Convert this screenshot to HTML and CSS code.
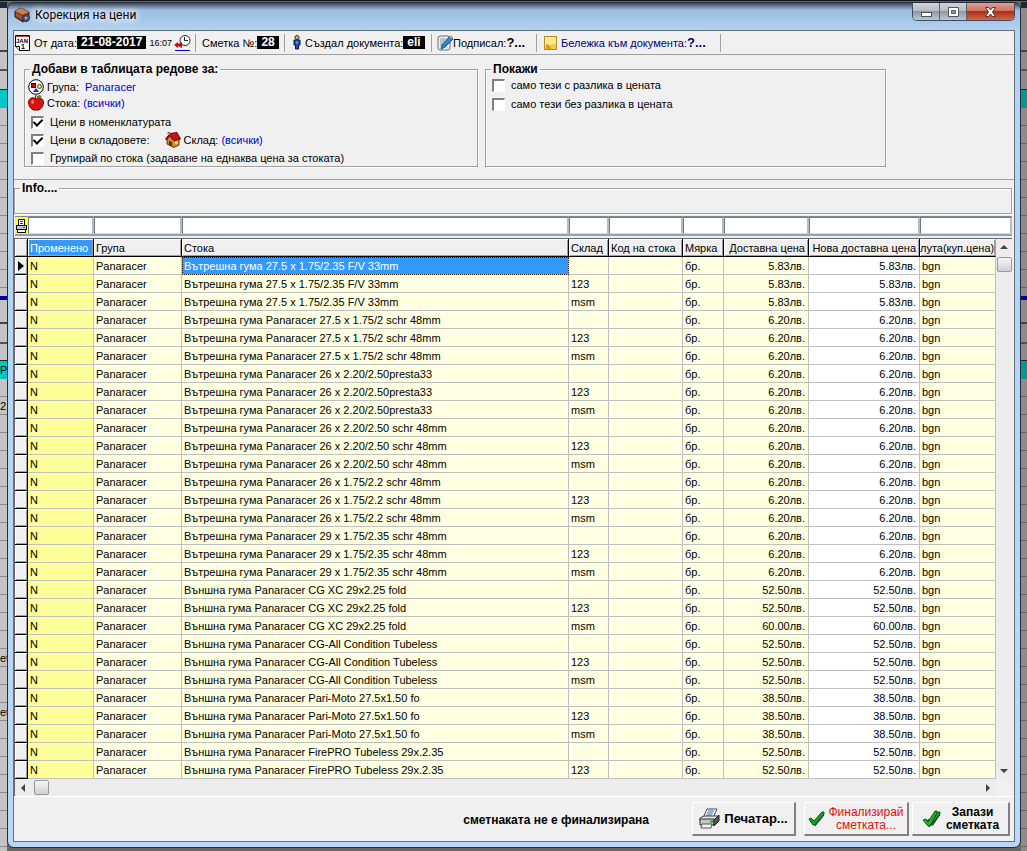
FILE: index.html
```html
<!DOCTYPE html>
<html lang="bg">
  <head>
    <meta charset="UTF-8" />
    <meta name="viewport" content="width=device-width, initial-scale=1.0"/>
    <title>Корекция на цени</title>
    <link rel="stylesheet" href="styles.css">
  </head>

  <body>
    <div class="desktop">
      <div class="strip">
        <div class="strip-head"></div>
        <div class="strip-cyan"></div>
        <div class="strip-rows upper"></div>
        <div class="strip-blue"></div>
        <div class="strip-mid"></div>
        <div class="strip-cyan">Pa</div>
        <div class="strip-rows code">2:</div>
        <div class="strip-rows tail">et</div>
        <div class="strip-rows last">et</div>
      </div>

      <div class="window">
        <div class="titlebar">
          <svg class="title-icon" width="17" height="16" viewBox="0 0 17 16">
            <path d="M1 4 7 1 15 5 15 11 9 15 1 10Z" fill="#7a3a1c" stroke="#3c1a0a"/>
            <path d="M1 4 7 1 15 5 9 8Z" fill="#c98050"/>
            <path d="M2 6 8 9 8 13 2 9Z" fill="#a3562e"/>
            <circle cx="12" cy="11" r="3.5" fill="#565a78" stroke="#25283c"/>
            <circle cx="12" cy="11" r="1" fill="#c8cce4"/>
          </svg>
          <h1>Корекция на цени</h1>
          <div class="window-buttons">
            <button class="win-btn" aria-label="Минимизирай">
              <svg width="13" height="12" viewBox="0 0 13 12"><rect x="1.500" y="6.500" width="10" height="4" fill="#fff" stroke="#555"/></svg>
            </button>
            <button class="win-btn" aria-label="Максимизирай">
              <svg width="13" height="12" viewBox="0 0 13 12"><path d="M1.500 1.500H11.500V10.500H1.500Z M4.500 4.500V7.500H8.500V4.500Z" fill="#fff" fill-rule="evenodd" stroke="#555"/></svg>
            </button>
            <button class="win-btn close" aria-label="Затвори">
              <svg width="13" height="12" viewBox="0 0 13 12"><path d="M1.500 1.500H4.500L6.500 4L8.500 1.500H11.500L8.500 6L11.500 10.500H8.500L6.500 8L4.500 10.500H1.500L4.500 6Z" fill="#fff" stroke="#5a3038"/></svg>
            </button>
          </div>
        </div>

        <main class="client">
          <div class="toolbar">
            <div class="tool date">
              <svg width="15" height="16" viewBox="0 0 15 16">
                <path d="M0.500 0.500H14.500V15.500H4.500L0.500 11.500Z" fill="#fff" stroke="#000"/>
                <path d="M1 1.500H14" stroke="#b44"/>
                <text class="cal-month" x="7" y="8" text-anchor="middle">JAN</text>
                <text class="cal-day" x="8" y="14" text-anchor="middle">1</text>
                <path d="M0.500 11.500H4.500V15.500" fill="#ddd" stroke="#000"/>
              </svg>
              <span class="caption">От дата:</span><b class="value">21-08-2017</b>
              <span class="time">16:07</span>
              <svg class="clock" width="17" height="16" viewBox="0 0 17 16">
                <circle cx="11" cy="5.500" r="5" fill="#fff" stroke="#222"/>
                <path d="M10.500 2V5.500H14" fill="none" stroke="#222"/>
                <path d="M0 10 4 7V9L8 7V13L4 11V13Z" fill="#e00000"/>
                <path d="M1 15.500H16" stroke="#0000d0"/>
              </svg>
            </div>
            <div class="tool bill"><span>Сметка №:</span><b class="value">28</b></div>
            <div class="tool author">
              <svg width="8" height="15" viewBox="0 0 8 15">
                <circle cx="4" cy="2.500" r="2" fill="#f0c040" stroke="#222"/>
                <path d="M1 5H7V10H5.500V14H2.500V10H1Z" fill="#1c50c8" stroke="#101840"/>
                <path d="M4 6V9" stroke="#6fd0ff"/>
              </svg>
              <span class="caption">Създал документа:</span><b class="value">eli</b>
            </div>
            <div class="tool signed">
              <svg width="16" height="16" viewBox="0 0 16 16">
                <rect x="1" y="1" width="12" height="14" rx="2" fill="#e8eef2" stroke="#667078"/>
                <path d="M3 4H9M3 6H8M3 8H6M3 10H5" stroke="#8b989e"/>
                <path d="M13 1 16 4 8 12 4 14 5 10Z" fill="#2b86d8" stroke="#14508e"/>
                <path d="M12 2 14 0 16 2 15 4Z" fill="#e49a50"/>
              </svg>
              <span>Подписал:</span><b class="mark">?...</b>
            </div>
            <div class="tool note">
              <svg width="13" height="14" viewBox="0 0 13 14">
                <rect x="0.500" y="0.500" width="12" height="13" fill="#fbe88a" stroke="#b08c30"/>
                <path d="M2 8 5 9 8 13H2Z" fill="#e39a18"/>
                <path d="M5 9 12 8V13H8Z" fill="#f2c84c"/>
              </svg>
              <a href="#">Бележка към документа:<b>?...</b></a>
            </div>
          </div>

          <div class="options">
            <fieldset class="add-rows">
              <legend>Добави в таблицата редове за:</legend>
              <div class="pick">
                <svg width="16" height="16" viewBox="0 0 16 16">
                  <circle cx="8" cy="8" r="7.300" fill="#fff" stroke="#000"/>
                  <rect x="3.500" y="4.500" width="4" height="4" fill="#d00" stroke="#400"/>
                  <circle cx="11.500" cy="7.500" r="2" fill="#ffe030" stroke="#444"/>
                  <path d="M8 9 11 13H5Z" fill="#1030b0"/>
                </svg>
                <span>Група:</span><a class="group-link" href="#">Panaracer</a>
              </div>
              <div class="pick">
                <svg width="16" height="16" viewBox="0 0 16 16">
                  <path d="M8 4C4 1 0 4 0.500 8 1 12 4 16 8 15 12 16 15 12 15.500 8 16 4 12 1 8 4Z" fill="#d81410" stroke="#7c0806"/>
                  <path d="M7 4 8 0" stroke="#4a2c10"/>
                  <path d="M8 2 11 0 14 1 11 3Z" fill="#3a8c2c"/>
                  <ellipse cx="4.500" cy="7" rx="1.500" ry="2" fill="#f77a68"/>
                </svg>
                <span>Стока:</span><a href="#">(всички)</a>
              </div>
              <div class="checks">
                <label class="check"><input type="checkbox" checked>Цени в номенклатурата</label>
                <div class="check-line">
                  <label class="check"><input type="checkbox" checked>Цени в складовете:</label>
                  <svg width="16" height="16" viewBox="0 0 16 16">
                    <path d="M2 7 5 4 8 8 14 7V13L9 15.500 2 12Z" fill="#d08a30" stroke="#6a3810"/>
                    <path d="M0.500 7 5 1.500 12 0.500 15.500 7 9 8.500 5 3.500 1.500 8Z" fill="#c41818" stroke="#6c0808"/>
                    <path d="M4 13V9L7 10V14.500Z" fill="#5c2c0c"/>
                    <path d="M10 10 13 9.500V11.500L10 12Z" fill="#ffe480"/>
                    <path d="M3 2V0.500H5" fill="none" stroke="#8a4a20"/>
                  </svg>
                  <span>Склад:</span><a href="#">(всички)</a>
                </div>
                <label class="check"><input type="checkbox">Групирай по стока (задаване на еднаква цена за стоката)</label>
              </div>
            </fieldset>
            <fieldset class="show">
              <legend>Покажи</legend>
              <label class="check"><input type="checkbox">само тези с разлика в цената</label>
              <label class="check"><input type="checkbox">само тези без разлика в цената</label>
            </fieldset>
          </div>

          <fieldset class="info">
            <legend>Info....</legend>
          </fieldset>

          <div class="filters">
            <button class="print-filter" aria-label="Печат">
              <svg width="11" height="14" viewBox="0 0 11 14">
                <path d="M2.500 6V0.500H8.500V6" fill="#fff" stroke="#000"/>
                <path d="M4 2.500H7M4 4.500H7" stroke="#1030b0"/>
                <rect x="0.500" y="6.500" width="10" height="4" fill="#c8c8c8" stroke="#000"/>
                <rect x="1.500" y="10.500" width="8" height="3" fill="#fff" stroke="#000"/>
                <path d="M7 8.500H9" stroke="#0a0"/>
              </svg>
            </button>
            <input type="text" aria-label="Променено">
            <input type="text" aria-label="Група">
            <input type="text" aria-label="Стока">
            <input type="text" aria-label="Склад">
            <input type="text" aria-label="Код на стока">
            <input type="text" aria-label="Мярка">
            <input type="text" aria-label="Доставна цена">
            <input type="text" aria-label="Нова доставна цена">
            <input type="text" aria-label="Валута">
          </div>

          <div class="grid-box">
            <table>
              <colgroup>
                <col class="c-mark"><col class="c-changed"><col class="c-group"><col class="c-item"><col class="c-store">
                <col class="c-code"><col class="c-unit"><col class="c-price"><col class="c-new"><col class="c-currency">
              </colgroup>
              <thead>
                <tr>
                  <th></th>
                  <th class="active">Променено</th>
                  <th>Група</th>
                  <th>Стока</th>
                  <th>Склад</th>
                  <th>Код на стока</th>
                  <th>Мярка</th>
                  <th class="num">Доставна цена</th>
                  <th class="num">Нова доставна цена</th>
                  <th class="currency">лута(куп.цена)</th>
                </tr>
              </thead>
              <tbody id="rows"></tbody>
            </table>
            <div class="vscroll">
              <span class="arrow up"></span>
              <span class="thumb"></span>
              <span class="arrow down"></span>
            </div>
            <div class="hscroll">
              <span class="arrow back"></span>
              <span class="thumb"></span>
              <span class="arrow forward"></span>
            </div>
          </div>

          <footer>
            <b class="status">сметнаката не е финализирана</b>
            <button class="action print">
              <svg width="22" height="21" viewBox="0 0 22 21">
                <path d="M8 1H18L14 10H4Z" fill="#fff" stroke="#446"/>
                <path d="M9 3H15M8 5H14M7 7H13" stroke="#2c60c0"/>
                <path d="M1 10 5 8H19L15 13H1Z" fill="#e4e4e4" stroke="#444"/>
                <path d="M1 11H15V17H1Z" fill="#c4c8c8" stroke="#333"/>
                <path d="M15 12 20 7V13L15 18Z" fill="#555" stroke="#222"/>
                <path d="M3 16H13L12 20H2Z" fill="#f4f4f4" stroke="#555"/>
                <path d="M11 13.500H14" stroke="#0b0" stroke-width="2"/>
              </svg>
              <span>Печатар...</span>
            </button>
            <button class="action finalize">
              <svg width="17" height="17" viewBox="0 0 17 17">
                <path d="M1 9 3 8 6 11 14 2 16 2 16 4 7 15 5 15Z" fill="#12a020" stroke="#0a5a14"/>
                <path d="M7 16 16 5" stroke="#10203c"/>
              </svg>
              <span>Финализирай<br>сметката...</span>
            </button>
            <button class="action save">
              <svg width="19" height="20" viewBox="0 0 19 20">
                <path d="M5 12 7 10 10 12 16 3 18 3 18 5 11 16 8 16Z" fill="#12a020" stroke="#0a5a14"/>
                <path d="M1 11 4 10 6 13 13 2 15 2 15 4 8 17 6 17Z" fill="#22b034" stroke="#0a5a14"/>
                <path d="M7 18 18 6" stroke="#10203c"/>
              </svg>
              <span>Запази<br>сметката</span>
            </button>
          </footer>
        </main>
      </div>

      <div class="strip shaded">
        <div class="strip-head"></div>
        <div class="strip-cyan"></div>
        <div class="strip-rows upper"></div>
        <div class="strip-blue"></div>
        <div class="strip-mid"></div>
        <div class="strip-cyan"></div>
        <div class="strip-rows code"></div>
        <div class="strip-rows tail"></div>
        <div class="strip-rows last"></div>
      </div>
    </div>

    <script>
      // name, price for each of the three stores: none, 123, msm
      const items = [
        ["Вътрешна гума 27.5 x 1.75/2.35 F/V 33mm", "5.83", "5.83", "5.83"],
        ["Вътрешна гума Panaracer 27.5 x 1.75/2 schr 48mm", "6.20", "6.20", "6.20"],
        ["Вътрешна гума Panaracer 26 x 2.20/2.50presta33", "6.20", "6.20", "6.20"],
        ["Вътрешна гума Panaracer 26 x 2.20/2.50 schr 48mm", "6.20", "6.20", "6.20"],
        ["Вътрешна гума Panaracer 26 x 1.75/2.2 schr 48mm", "6.20", "6.20", "6.20"],
        ["Вътрешна гума Panaracer 29 x 1.75/2.35 schr 48mm", "6.20", "6.20", "6.20"],
        ["Външна гума Panaracer CG XC 29x2.25 fold", "52.50", "52.50", "60.00"],
        ["Външна гума Panaracer CG-All Condition Tubeless", "52.50", "52.50", "52.50"],
        ["Външна гума Panaracer Pari-Moto 27.5x1.50 fo", "38.50", "38.50", "38.50"],
        ["Външна гума Panaracer FirePRO Tubeless 29x.2.35", "52.50", "52.50"]
      ];
      const stores = ["", "123", "msm"];

      let html = "";
      items.forEach(([name, ...prices], n) => {
        prices.forEach((price, i) => {
          const current = n === 0 && i === 0;
          html += `<tr${current ? ' class="current"' : ""}>
            <th scope="row">${current ? '<span class="pointer"></span>' : ""}</th>
            <td class="changed">N</td>
            <td>Panaracer</td>
            <td class="item">${name}</td>
            <td>${stores[i]}</td>
            <td></td>
            <td>бр.</td>
            <td class="num">${price}лв.</td>
            <td class="num new">${price}лв.</td>
            <td>bgn</td>
          </tr>`;
        });
      });
      document.getElementById("rows").innerHTML = html;
    </script>
  </body>
</html>
```
FILE: styles.css
```css
* {
  box-sizing: border-box;
}

body {
  margin: 0;
  font-family: "Liberation Sans", Arial, sans-serif;
  font-size: 11px;
  line-height: 14px;
  color: #000;
  background-color: #6d6d6d;
}

a {
  color: #0000d0;
  text-decoration: none;
}

button,
input {
  font: inherit;
  color: inherit;
}

svg {
  flex: none;
  display: block;
}

/* what shows of the program behind the window */
.desktop {
  display: grid;
  grid-template-columns: 7px minmax(0, 1fr) 6px;
  min-height: 100vh;
  padding-top: 1px;
  background-color: #666;
  border-top: 1px solid #10151c;
}

.strip {
  display: flex;
  flex-direction: column;
  overflow: hidden;
  background-color: #c4c4c4;
  line-height: 18px;
}

.strip.shaded {
  background-color: #8c8c8c;
}

.strip-head {
  height: 88px;
  background: linear-gradient(#1c2838 0 6px, transparent 6px 48px, #444 48px 50px, transparent 50px 67px, #555 67px 69px, transparent 69px 87px, #222 87px);
}

.strip-cyan {
  height: 18px;
  background-color: #00c8c8;
}

.shaded .strip-cyan {
  background-color: #009a94;
}

.strip-rows {
  background: repeating-linear-gradient(transparent 0 17px, #8a8a8a 17px 18px);
}

.shaded .strip-rows {
  background: repeating-linear-gradient(transparent 0 17px, #666 17px 18px);
}

.upper {
  height: 188px;
}

.strip-blue {
  height: 4px;
  background-color: #0000a8;
}

.strip-mid {
  height: 61px;
  background: linear-gradient(transparent 0 22px, #444 22px 24px, transparent 24px 42px, #555 42px 44px, transparent 44px 60px, #222 60px);
}

.code {
  height: 270px;
  padding-top: 18px;
}

.tail {
  height: 54px;
}

.last {
  flex: 1;
}

.window {
  border: 1px solid #25303c;
  border-radius: 7px;
  padding: 0 5px 5px;
  margin-bottom: 3px;
  background: linear-gradient(#39485c 0, #9dbbdc 7px, #b4d3f3 28px, #b9d7f7 100%);
}

.titlebar {
  display: flex;
  align-items: flex-start;
  height: 27px;
}

.title-icon {
  margin: 4px 4px 0 1px;
}

h1 {
  margin: 0;
  padding-top: 3px;
  font-family: Roboto, "Open Sans", sans-serif;
  font-size: 12px;
  line-height: 18px;
  font-weight: normal;
  text-shadow: 0 0 6px #fff, 0 0 8px #fff, 0 0 10px #fff;
}

.window-buttons {
  display: flex;
  margin-left: auto;
  border: 1px solid #3f4f60;
  border-top: 0;
  border-radius: 0 0 5px 5px;
  overflow: hidden;
}

.win-btn {
  display: flex;
  align-items: center;
  justify-content: center;
  width: 27px;
  height: 17px;
  padding: 0;
  border: 0;
  border-right: 1px solid #5a6470;
  background: linear-gradient(#d0d4da, #b4bac2 50%, #8e98a4 50%, #b8c8d8);
}

.win-btn.close {
  width: 47px;
  border-right: 0;
  background: linear-gradient(#e0a094, #cc6a5a 50%, #b02c18 50%, #d06848);
}

.client {
  border: 1px solid #5f707e;
  background-color: #f0f0f0;
}

/* toolbar */
.toolbar {
  display: flex;
  align-items: center;
  height: 24px;
  border-bottom: 1px solid #a0a0a0;
}

.tool {
  display: flex;
  align-items: center;
  height: 18px;
  border-right: 1px solid #a0a0a0;
  white-space: nowrap;
}

.caption {
  margin-left: 4px;
}

.value {
  padding: 0 4px;
  background-color: #000;
  color: #fff;
  font-size: 12px;
  line-height: 13px;
}

.date {
  width: 182px;
  padding-left: 1px;
}

.cal-month {
  font-size: 6px;
  font-weight: bold;
}

.cal-day {
  font-size: 7px;
  font-weight: bold;
}

.time {
  margin-left: 3px;
  font-size: 9px;
}

.clock {
  margin-left: 2px;
}

.bill {
  width: 89px;
  padding-left: 6px;
}

.author {
  width: 147px;
  padding-left: 8px;
}

.signed {
  width: 105px;
  padding-left: 5px;
}

.note {
  width: 184px;
  padding-left: 7px;
  gap: 4px;
}

.note a {
  color: #000080;
}

.mark,
.note b {
  font-size: 13px;
}

/* group boxes */
fieldset {
  min-width: 0;
  margin: 0;
  padding: 0;
  border: 1px solid #a0a0a0;
  box-shadow: 1px 1px #fff, inset 1px 1px #fff;
}

legend {
  margin-left: 5px;
  padding: 0 2px;
  font-size: 12px;
  line-height: 14px;
  font-weight: bold;
}

.options {
  display: flex;
  align-items: stretch;
  gap: 7px;
  height: 125px;
  padding: 7px 10px 12px;
  border-bottom: 1px solid #a0a0a0;
}

.add-rows {
  flex: 0 1 454px;
}

.pick {
  display: flex;
  align-items: center;
  gap: 3px;
  height: 16px;
  margin-left: 3px;
}

.add-rows legend + .pick {
  margin-top: 3px;
}

.group-link {
  margin-left: 3px;
}

.checks {
  margin-top: 2px;
}

.check-line {
  display: flex;
  align-items: center;
  gap: 3px;
}

.check-line svg {
  margin-left: 12px;
}

.check {
  display: flex;
  align-items: center;
  gap: 6px;
  height: 18px;
  padding-left: 6px;
  white-space: nowrap;
}

.check input {
  appearance: none;
  flex: none;
  display: flex;
  align-items: center;
  justify-content: center;
  width: 13px;
  height: 13px;
  margin: 0;
  border: 1px solid #fff;
  border-top: 2px solid #808080;
  border-left: 2px solid #808080;
  background-color: #fff;
}

.check input:checked::before {
  content: "";
  width: 4px;
  height: 7px;
  margin-bottom: 2px;
  border-right: 2px solid #000;
  border-bottom: 2px solid #000;
  transform: rotate(45deg);
}

.show {
  flex: 0 1 401px;
}

.show .check + .check {
  margin-top: 1px;
}

.info {
  height: 33px;
  margin: 1px 2px 2px 0;
}

/* filter row shares its columns with the table */
.filters {
  display: grid;
  grid-template-columns: 13px 66px 88px minmax(0, 1fr) 40px 74px 41px 85px 111px 92px;
  height: 20px;
  margin: 0 2px 0 1px;
  border-top: 1px solid #7b8d9a;
  border-bottom: 2px solid #8fa2ae;
  background-color: #d8dcde;
}

.filters input {
  width: 100%;
  min-width: 0;
  border: 1px solid #6c7c88;
  border-right: 2px solid #b8bcc0;
  border-bottom: 1px solid #d8dcde;
  margin: 0;
  padding: 0 2px;
  background-color: #fff;
}

.print-filter {
  display: flex;
  align-items: center;
  justify-content: center;
  padding: 0;
  border: 0;
  background-color: #ffff20;
}

/* price table */
.grid-box {
  display: grid;
  grid-template-columns: minmax(0, 1fr) 16px;
  margin: 2px 2px 0 0;
  border-top: 1px solid #696969;
  border-left: 1px solid #696969;
}

table {
  width: 100%;
  table-layout: fixed;
  border-collapse: separate;
  border-spacing: 0;
}

.c-mark { width: 13px; }
.c-changed { width: 66px; }
.c-group { width: 88px; }
.c-store { width: 40px; }
.c-code { width: 74px; }
.c-unit { width: 41px; }
.c-price { width: 85px; }
.c-new { width: 111px; }
.c-currency { width: 76px; }

th,
td {
  height: 18px;
  padding: 0 2px;
  line-height: 16px;
  font-weight: normal;
  text-align: left;
  white-space: nowrap;
  overflow: hidden;
}

th {
  border-right: 1px solid #000;
  border-bottom: 1px solid #000;
  background-color: #f0f0f0;
  box-shadow: inset 1px 1px #fff, inset -1px -1px #a0a0a0;
}

th.active {
  background-color: #3399ff;
  color: #fff;
}

th.currency {
  padding: 0;
  border-right-color: #a0a0a0;
}

td {
  border-right: 1px solid #c0c0c0;
  border-bottom: 1px solid #c0c0c0;
  background-color: #ffffe1;
}

td.changed {
  background-color: #ffff99;
}

td.new {
  background-color: #fff;
}

.num {
  padding-right: 3px;
  text-align: right;
}

.current .item {
  background-color: #3399ff;
  color: #fff;
  outline: 1px dotted #402000;
  outline-offset: -1px;
}

.pointer {
  display: block;
  width: 0;
  border: 5px solid transparent;
  border-left: 6px solid #000;
  border-right: 0;
  margin-left: 1px;
}

/* scroll bars */
.vscroll,
.hscroll {
  display: flex;
  align-items: center;
  background-color: #ececec;
}

.vscroll {
  flex-direction: column;
  padding: 6px 0;
}

.hscroll {
  height: 17px;
  padding: 0 6px;
}

.thumb {
  width: 15px;
  height: 15px;
  border: 1px solid #989898;
  border-radius: 2px;
  background: linear-gradient(#f6f6f6, #d0d0d4);
}

.vscroll .thumb {
  margin-top: 8px;
}

.hscroll .thumb {
  margin-left: 9px;
}

.arrow {
  border: 4px solid transparent;
}

.up {
  border-top: 0;
  border-bottom-color: #404040;
}

.down {
  margin-top: auto;
  border-bottom: 0;
  border-top-color: #404040;
}

.back {
  border-left: 0;
  border-right-color: #404040;
}

.forward {
  margin-left: auto;
  border-right: 0;
  border-left-color: #404040;
}

/* bottom bar */
footer {
  display: flex;
  align-items: flex-start;
  justify-content: flex-end;
  height: 45px;
  padding: 5px 4px 0 0;
  border-top: 1px solid #fff;
}

.status {
  margin-right: 43px;
  font-size: 12px;
  line-height: 36px;
}

.action {
  display: flex;
  align-items: center;
  justify-content: center;
  height: 34px;
  padding: 0 2px;
  border: 1px solid #fff;
  border-right: 2px solid #808080;
  border-bottom: 2px solid #808080;
  background-color: #f0f0f0;
  line-height: 13px;
}

.print {
  gap: 3px;
  width: 104px;
  margin-right: 8px;
  font-size: 13px;
  font-weight: bold;
}

.finalize {
  gap: 3px;
  width: 105px;
  margin-right: 3px;
  font-size: 12px;
  color: #e01010;
}

.save {
  gap: 5px;
  width: 98px;
  font-size: 12px;
  font-weight: bold;
}
```
